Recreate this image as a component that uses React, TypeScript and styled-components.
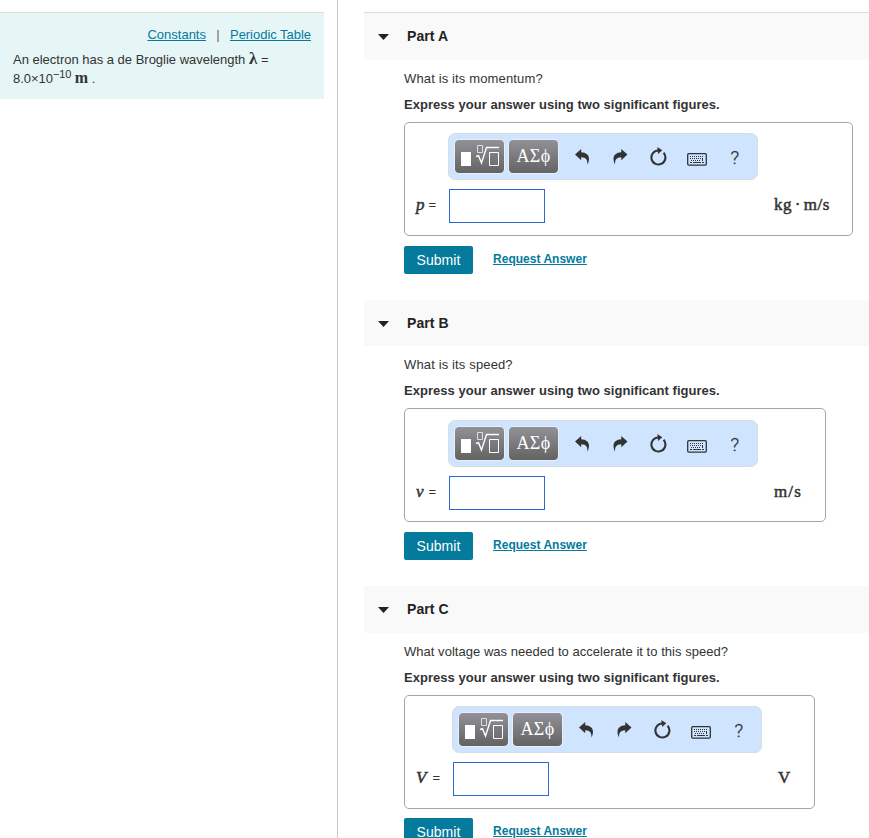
import React from "react";
import styled, { createGlobalStyle } from "styled-components";

const Global = createGlobalStyle`
  * { box-sizing: border-box; }
  body {
    margin: 0;
    background: #fff;
    color: #333;
    font: 13px/19px "Liberation Sans", Arial, sans-serif;
    overflow: hidden;
  }
`;

const Page = styled.div`
  display: grid;
  grid-template-columns: 338px 1fr;
  height: 838px;
  overflow: hidden;
`;
const Sidebar = styled.aside`
  padding-top: 12px;
  border-right: 1px solid #c4c9d0;
`;
const Problem = styled.section`
  width: 324px;
  height: 87px;
  padding: 12px 13px 0;
  border-top: 1px solid #dadedd;
  background: #e6f6f7;
`;
const Resources = styled.nav`
  display: flex;
  justify-content: flex-end;
  align-items: center;
  height: 19px;
  margin-bottom: 6px;
`;
const Divider = styled.span`
  width: 24px;
  text-align: center;
  color: #7b5a7a;
`;
const Link = styled.a<{ $bold?: boolean; $spacing: number }>`
  color: #047a9c;
  text-decoration: underline;
  text-underline-offset: 1px;
  font-size: ${(p) => (p.$bold ? 12 : 13)}px;
  font-weight: ${(p) => (p.$bold ? 700 : 400)};
  letter-spacing: ${(p) => p.$spacing}px;
`;
const Statement = styled.p`
  margin: 0;
  letter-spacing: -0.01px;
  white-space: nowrap;
`;
const Exponent = styled.sup`
  font-size: 11px;
  line-height: 0;
  vertical-align: 5px;
  letter-spacing: -0.2px;
`;
const MathText = styled.span<{ $italic?: boolean; $size?: number; $weight?: number; $spacing?: number }>`
  font-family: "Liberation Serif", "Times New Roman", serif;
  font-size: ${(p) => p.$size ?? 17}px;
  font-style: ${(p) => (p.$italic ? "italic" : "normal")};
  font-weight: ${(p) => p.$weight ?? 400};
  -webkit-text-stroke: ${(p) => (p.$weight ? 0 : 0.5)}px #333;
  letter-spacing: ${(p) => p.$spacing ?? 0}px;
  line-height: 18px;
  white-space: nowrap;
`;

const Main = styled.main`
  padding: 12px 0 0 26px;
  overflow: hidden;
`;
const Header = styled.header<{ $height: number; $line?: boolean }>`
  display: flex;
  align-items: flex-start;
  height: ${(p) => p.$height}px;
  padding: 14px 0 0 14px;
  border-top: ${(p) => (p.$line ? "1px solid #dcdcdc" : "0")};
  background: #f9f9f9;
  svg { display: block; margin: 7px 18px 0 0; }
`;
const Title = styled.h2`
  margin: 0;
  color: #222;
  font-size: 14px;
  line-height: 18px;
  letter-spacing: 0.1px;
`;
const Content = styled.div`
  padding: 9px 0 0 40px;
`;
const Question = styled.p<{ $spacing: number }>`
  margin: 0 0 7px;
  letter-spacing: ${(p) => p.$spacing}px;
`;
const Instruction = styled.p`
  margin: 0 0 8px;
  font-weight: 700;
  letter-spacing: 0.03px;
`;
const AnswerBox = styled.div<{ $width: number; $left: number; $top: number }>`
  width: ${(p) => p.$width}px;
  height: 114px;
  padding: ${(p) => p.$top}px 0 0 ${(p) => p.$left}px;
  border: 1px solid #a6a6a6;
  border-radius: 5px;
`;
const Toolbar = styled.div`
  display: flex;
  align-items: center;
  width: 310px;
  height: 47px;
  padding: 0 0 0 5px;
  border: 1px solid #d9dce0;
  border-radius: 7px;
  background: #cfe5ff;
`;
const Key = styled.button`
  display: flex;
  align-items: center;
  justify-content: center;
  width: 51px;
  height: 35px;
  margin-right: 3px;
  padding: 0 0 2px;
  border: 1px solid #eceef2;
  border-radius: 5px;
  background: linear-gradient(#929198, #636363);
  color: #fff;
  svg { display: block; }
`;
const Greek = styled.span`
  font-family: "Liberation Serif", serif;
  font-size: 18px;
  line-height: 22px;
  letter-spacing: 0.4px;
`;
const Tool = styled.button<{ $drop?: number }>`
  display: flex;
  align-items: center;
  justify-content: center;
  width: 38.2px;
  height: 30px;
  padding: ${(p) => p.$drop ?? 0}px 0 0;
  border: 0;
  background: none;
  color: #333;
  font: 300 19px Roboto, sans-serif;
  -webkit-text-stroke: 0.3px #333;
  svg { display: block; flex: none; }
`;
const ToolGroup = styled.div`
  display: flex;
  margin-left: 1px;
`;
const EntryRow = styled.label<{ $left: number }>`
  display: flex;
  align-items: center;
  height: 34px;
  margin: 9px 0 0 -${(p) => p.$left}px;
`;
const Variable = styled.span<{ $width: number }>`
  display: flex;
  align-items: center;
  justify-content: space-between;
  width: ${(p) => p.$width}px;
  padding: 0 13px 2px 11px;
`;
const Equals = styled.span`
  height: 19px;
  line-height: 18px;
`;
const Entry = styled.input`
  width: 96px;
  height: 34px;
  padding: 4px;
  border: 1px solid #3067cd;
  border-radius: 0;
  background: #fff;
  outline: 0;
`;
const Unit = styled.span<{ $gap: number }>`
  margin: 0 0 1px ${(p) => p.$gap}px;
  word-spacing: -1.8px;
`;
const Actions = styled.div<{ $top: number }>`
  display: flex;
  height: 64px;
  padding-top: ${(p) => p.$top}px;
`;
const Submit = styled.button`
  width: 69px;
  height: 28px;
  margin-right: 20px;
  padding: 0;
  border: 0;
  border-radius: 2px;
  background: #047a9c;
  color: #fff;
  font: 14px "Liberation Sans", Arial, sans-serif;
  letter-spacing: 0.05px;
`;
const RequestWrap = styled.span`
  padding-top: 3px;
`;

const Caret = () => (
  <svg width="11" height="6" viewBox="0 0 11 6"><path d="M0 0h11L5.5 6z" fill="#222" /></svg>
);
const RootIcon = () => (
  <svg width="38" height="22" viewBox="0 0 38 22" fill="none" stroke="#fff">
    <path d="M0 7h10v14H0z" fill="#fff" stroke="none" />
    <path d="M16.5.5h5v7h-5z" stroke="#dedee2" />
    <path d="M15 11.500l2.500-.8 3 7.300 5-15.500h12.500" strokeWidth="1.400" />
    <path d="M28.500 7.500h9v13h-9z" />
  </svg>
);
const UndoIcon = () => (
  <svg width="15" height="16" viewBox="0 0 15 16">
    <path d="M0 5.6L6.2 0v3.2c5 .2 7.8 2.7 7.8 6.6 0 2.2-.6 4.2-1.6 5.7.3-4.6-1.1-7.2-6.2-7.3v3.1z" fill="#333" />
  </svg>
);
const RedoIcon = () => (
  <svg width="15" height="16" viewBox="0 0 15 16">
    <path d="M14.500 5.600L8.300 0v3.200C3.300 3.400.5 5.900.5 9.800c0 2.200.6 4.200 1.600 5.700-.3-4.600 1.100-7.200 6.200-7.300v3.100z" fill="#333" />
  </svg>
);
const ResetIcon = () => (
  <svg width="17" height="19" viewBox="0 0 17 19">
    <path d="M13.600 5.800A7 7 0 1 1 8.500 3.500" fill="none" stroke="#333" strokeWidth="2.100" />
    <path d="M7.300 0l5 3.300-4.200 3.700z" fill="#333" />
  </svg>
);
const KeyboardIcon = () => (
  <svg width="20" height="13" viewBox="0 0 20 13" fill="none" stroke="#333">
    <rect x=".7" y=".7" width="18.600" height="11.400" rx="1" strokeWidth="1.300" />
    <path d="M3 3.500h14M3 5.500h11M4 7.500h10" strokeDasharray="1 1" />
    <path d="M15.500 5v3M3 9.500h2M6 9.500h8M15 9.500h2" />
  </svg>
);

type PartData = {
  name: string; question: string; spacing: number; symbol: string; unit: string; unitSpacing: number;
  header: number; box: number; left: number; top: number; unitGap: number; actions: number; line?: boolean;
};
const parts: PartData[] = [
  { name: "Part A", question: "What is its momentum?", spacing: 0.14, symbol: "p", unit: "kg · m/s", unitSpacing: 0.45, header: 48, box: 449, left: 43, top: 10, unitGap: 229, actions: 10, line: true },
  { name: "Part B", question: "What is its speed?", spacing: 0.14, symbol: "v", unit: "m/s", unitSpacing: 1.1, header: 46, box: 422, left: 43, top: 11, unitGap: 229, actions: 10 },
  { name: "Part C", question: "What voltage was needed to accelerate it to this speed?", spacing: 0.03, symbol: "V", unit: "V", unitSpacing: 0, header: 47, box: 411, left: 47, top: 10, unitGap: 229, actions: 9 },
];

const Part = ({ data }: { data: PartData }) => (
  <section>
    <Header $height={data.header} $line={data.line}><Caret /><Title>{data.name}</Title></Header>
    <Content>
      <Question $spacing={data.spacing}>{data.question}</Question>
      <Instruction>Express your answer using two significant figures.</Instruction>
      <AnswerBox $width={data.box} $left={data.left} $top={data.top}>
        <Toolbar>
          <Key aria-label="Templates"><RootIcon /></Key>
          <Key aria-label="Symbols"><Greek>ΑΣϕ</Greek></Key>
          <ToolGroup>
            <Tool aria-label="Undo"><UndoIcon /></Tool>
            <Tool aria-label="Redo"><RedoIcon /></Tool>
            <Tool aria-label="Reset"><ResetIcon /></Tool>
            <Tool aria-label="Keyboard" $drop={5}><KeyboardIcon /></Tool>
            <Tool aria-label="Help" $drop={1}>?</Tool>
          </ToolGroup>
        </Toolbar>
        <EntryRow $left={data.left}>
          <Variable $width={data.left + 1}><MathText $italic>{data.symbol}</MathText><Equals>=</Equals></Variable>
          <Entry />
          <Unit $gap={data.unitGap}><MathText $spacing={data.unitSpacing}>{data.unit}</MathText></Unit>
        </EntryRow>
      </AnswerBox>
      <Actions $top={data.actions}>
        <Submit>Submit</Submit>
        <RequestWrap><Link $bold $spacing={0.02}>Request Answer</Link></RequestWrap>
      </Actions>
    </Content>
  </section>
);

export default function App() {
  return (
    <Page>
      <Global />
      <Sidebar>
        <Problem>
          <Resources>
            <Link $spacing={0}>Constants</Link><Divider>|</Divider><Link $spacing={-0.03}>Periodic Table</Link>
          </Resources>
          <Statement>
            An electron has a de Broglie wavelength <MathText $weight={700} $size={17}>λ</MathText> =<br />
            8.0×10<Exponent>−10</Exponent> <MathText $weight={700} $size={16}>m</MathText> .
          </Statement>
        </Problem>
      </Sidebar>
      <Main>{parts.map((part) => <Part key={part.name} data={part} />)}</Main>
    </Page>
  );
}
